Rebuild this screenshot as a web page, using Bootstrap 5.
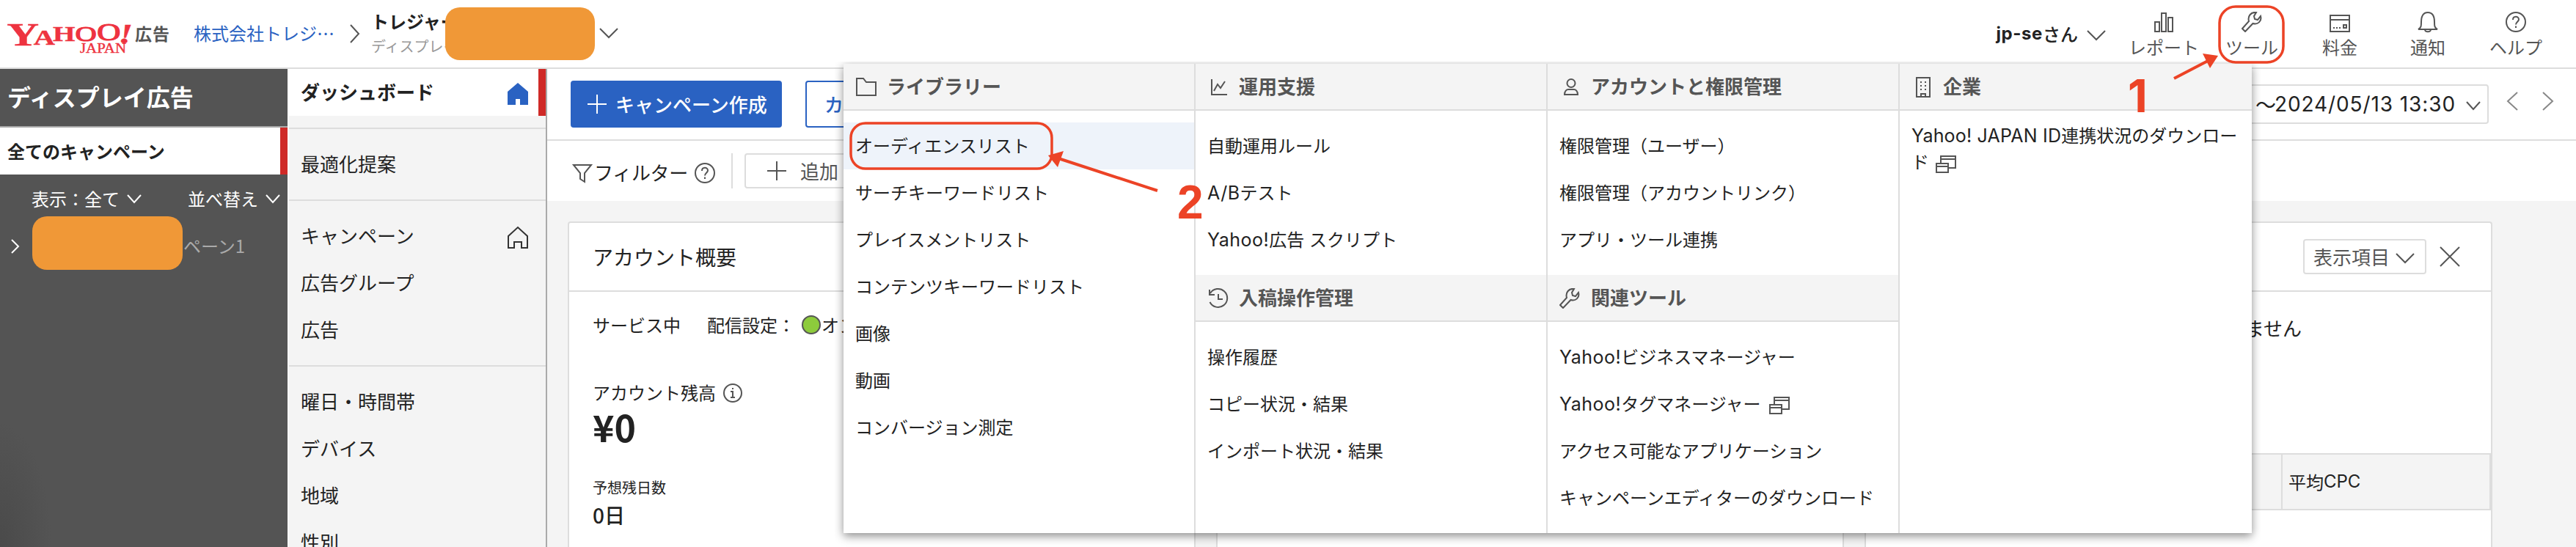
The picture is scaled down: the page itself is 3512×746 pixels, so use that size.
<!DOCTYPE html>
<html lang="ja">
<head>
<meta charset="utf-8">
<title>Yahoo!広告</title>
<link href="https://cdn.jsdelivr.net/npm/bootstrap@5.3.0/dist/css/bootstrap.min.css" rel="stylesheet">
<script src="https://cdn.jsdelivr.net/npm/bootstrap@5.3.0/dist/js/bootstrap.bundle.min.js"></script>
<style>
:root{--ink:#222;--sub:#555;--rule:#ddd;--pale:#f4f4f4;--brand:#2a62c2;--mark:#ec4326}
html{overflow:hidden}
body{font-family:"Inter","Noto Sans CJK JP",sans-serif;font-size:24px;line-height:1;color:var(--ink);background:#fff;width:3512px;height:746px;overflow:hidden;position:relative}
body *{white-space:nowrap}
svg{display:block;fill:none;stroke:#555;stroke-width:2;flex:none;overflow:visible}
.jp{font-family:"Noto Sans CJK JP",sans-serif}
.f26{font-size:26px}
.latin{font-size:25px;letter-spacing:.5px}
.topbar{height:94px;border-bottom:2px solid var(--rule)}
.brandname{width:168px;height:46px}
.mask{background:#f09837;border-radius:20px;flex:none}
.account{width:100px;overflow:visible}
.tool{width:120px;color:var(--sub)}
.shell{height:652px;overflow:hidden}
.campaigns{width:392px;background:radial-gradient(ellipse 70px 170px at 0 100%,#4a4a4a,#545454);color:#fff}
.campaigns h1{height:80px;font-size:32px;padding:0 0 3px 10px;border-bottom:2px solid #aaa}
.allcamp{height:64px;background:#fff;color:var(--ink);border-right:10px solid #cf2a27;padding:0 0 1px 10px}
.sidenav{width:354px;background:var(--pale);border-left:2px solid #fff;border-right:2px solid #aaa}
.sidenav a{height:64px;color:var(--ink);font-size:26px;padding:0 24px 2px 16px;text-decoration:none}
.sidenav .on{background:#fff;border-right:10px solid #cf2a27;padding-right:14px}
.sidenav a svg{margin-top:6px}
.sidenav .group{padding:16px 0;border-bottom:2px solid var(--rule)}
.bar1{height:98px;border-bottom:2px solid var(--rule);padding:0 28px 0 32px}
.bar2{height:82px;padding-left:35px;background:#fff}
.btn-a{height:64px;border-radius:4px;border:2px solid var(--brand);font-size:26px}
.panels{background:var(--pale);padding:28px 114px 0 28px;gap:28px;height:472px}
.panel{width:856px;background:#fff;border:2px solid var(--rule);border-bottom:0;border-radius:4px 4px 0 0}
.panel>header{height:94px;border-bottom:2px solid var(--rule);font-size:28px;padding:0 32px}
.line{padding-left:32px}
.box{border:2px solid var(--rule);border-radius:4px;background:#fff}
.mega{left:1150px;top:87px;width:1920px;height:640px;background:#fff;box-shadow:0 4px 12px rgba(0,0,0,.45);clip-path:inset(-3px -12px -20px -12px)}
.mega>div{width:480px;border-right:2px solid var(--rule)}
.mega>div:last-child{border-right:0}
.mega h2{height:64px;margin:0;background:var(--pale);border-bottom:2px solid var(--rule);color:var(--sub);font-size:26px;font-weight:700;padding:1px 0 0 16px}
.mega h2 svg{width:28px;height:28px;margin-right:15px}
.mega ul{list-style:none;margin:0;padding:16px 0}
.mega li{height:64px;padding:1px 0 0 16px;display:flex;align-items:center}
.mega li.hot{background:#eef3fa}
.notes{left:0;top:0;width:3512px;height:746px;stroke:var(--mark);pointer-events:none}
.notes text{font:700 64px "Liberation Sans",sans-serif;fill:var(--mark);stroke:none}
.notes polygon{fill:var(--mark)}
</style>
</head>
<body>
<svg width="0" height="0" class="position-absolute">
 <defs>
  <symbol id="wrench" viewBox="0 0 28 28"><path d="M1 23L10 13C8 6 13 0 20 1L17 6l1 4 4 1 4-5c2 7-4 12-10.500 10L5 27Z"/></symbol>
  <symbol id="windows" viewBox="0 0 28 24"><path d="M7 10V1h20v16h-9M7 5h20M1 11h16v12H1zM1 15h16"/></symbol>
  <symbol id="help" viewBox="0 0 28 28"><circle cx="14" cy="14" r="13"/><path d="M10 11c0-5.500 8-5.500 8-.5 0 3-4 3.500-4 7M14 19.500v2.500"/></symbol>
 </defs>
</svg>

<header class="topbar d-flex align-items-center">
 <svg class="brandname" viewBox="0 0 168 46" style="margin-left:10px"><g style="fill:#ee3340;stroke:#ee3340;stroke-width:.4;font-family:'Liberation Serif',serif;font-weight:700"><text transform="scale(1.35 1)" font-size="45"><tspan x="-.5" y="39">Y</tspan><tspan x="26.500" y="38" font-size="30">A</tspan><tspan x="46" y="33" font-size="29">H</tspan><tspan x="68.500" y="33" font-size="30" font-weight="400" stroke-width="1.200">O</tspan><tspan x="90.500" y="32" font-size="33" font-weight="400" stroke-width="1.200">O</tspan><tspan x="112" y="36" font-size="38" font-style="italic">!</tspan></text><text x="99" y="49" font-size="19" font-weight="400" textLength="63" lengthAdjust="spacingAndGlyphs">JAPAN</text></g></svg>
 <span class="fw-bold jp" style="color:#555;margin:0 0 2px 6px;width:80px;font-size:23px;letter-spacing:1px">広告</span>
 <span class="jp" style="color:#2a62c2;width:213px;margin-bottom:2px">株式会社トレジ…</span>
 <svg width="14" height="26"><path d="M1 1l11 12L1 25"/></svg>
 <div class="account jp d-flex flex-column" style="margin:0 0 2px 15px;width:101px;gap:12px"><b>トレジャー</b><span style="font-size:20px;color:#999">ディスプレイ</span></div>
 <div class="mask" style="width:204px;height:72px;position:relative"></div>
 <svg width="26" height="14" style="margin:0 0 2px 6px"><path d="M1 1l12 12L25 1"/></svg>
 <div class="ms-auto d-flex align-items-center"><span style="font-weight:700;letter-spacing:.6px">jp-se</span><span class="jp fw-medium">さん</span><svg width="26" height="14" style="margin:3px 19px 0 12px"><path d="M1 1l12 12L25 1"/></svg></div>
 <nav class="d-flex jp" style="margin-right:22px">
  <div class="tool d-flex flex-column align-items-center gap-2"><svg width="28" height="28"><path d="M2 14h6v13H2zM11 2h6v25h-6zM20 8h6v19h-6z"/></svg>レポート</div>
  <div class="tool d-flex flex-column align-items-center gap-2"><svg width="28" height="28"><use href="#wrench"/></svg>ツール</div>
  <div class="tool d-flex flex-column align-items-center gap-2"><svg width="28" height="28"><path d="M1 5h26v22H1zM1 11h26M19 18h4v4h-4zM5 22h2M9 22h2M13 22h2"/></svg>料金</div>
  <div class="tool d-flex flex-column align-items-center gap-2"><svg width="28" height="28"><path d="M1 24c4-2 4-5 4-10C5 5 8 1 14 1s9 4 9 13c0 5 0 8 4 10zM10 25c1 3 7 3 8 0"/></svg>通知</div>
  <div class="tool d-flex flex-column align-items-center gap-2"><svg width="28" height="28"><use href="#help"/></svg>ヘルプ</div>
 </nav>
</header>

<div class="shell d-flex">
 <aside class="campaigns jp flex-shrink-0">
  <h1 class="fw-bold m-0 d-flex align-items-center">ディスプレイ広告</h1>
  <div class="allcamp fw-bold d-flex align-items-center">全てのキャンペーン</div>
  <div class="d-flex align-items-center" style="height:56px;margin-top:5px;padding-left:43px"><span style="width:130px">表示：全て</span><svg width="20" height="12" style="stroke:#fff"><path d="M1 1l9 10 9-10"/></svg><span style="margin-left:63px;width:106px">並べ替え</span><svg width="20" height="12" style="stroke:#fff"><path d="M1 1l9 10 9-10"/></svg></div>
  <div class="d-flex align-items-center" style="height:74px;padding-left:15px;margin-top:-5px"><svg width="12" height="20" style="stroke:#fff;margin-right:17px;margin-top:10px"><path d="M1 1l9 9-9 9"/></svg><div class="mask" style="width:205px;height:73px"></div><span style="color:#aaa;margin:8px 0 0 1px">ペーン1</span></div>
 </aside>

 <nav class="sidenav jp flex-shrink-0">
  <div class="group pt-0">
   <a class="on fw-bold d-flex align-items-center justify-content-between">ダッシュボード<svg width="28" height="30" style="stroke:none;fill:#2a62c2"><path d="M0 12L14 0l14 12v18H17v-8h-6v8H0z"/></svg></a>
  </div>
  <div class="group"><a class="d-flex align-items-center">最適化提案</a></div>
  <div class="group">
   <a class="d-flex align-items-center justify-content-between">キャンペーン<svg width="28" height="30" style="stroke:#333"><path d="M1 13L14 1l13 12v16h-8v-8H9v8H1z"/></svg></a>
   <a class="d-flex align-items-center">広告グループ</a>
   <a class="d-flex align-items-center">広告</a>
  </div>
  <div class="group">
   <a class="d-flex align-items-center">曜日・時間帯</a>
   <a class="d-flex align-items-center">デバイス</a>
   <a class="d-flex align-items-center">地域</a>
   <a class="d-flex align-items-center">性別</a>
  </div>
 </nav>

 <main class="flex-grow-1">
  <div class="bar1 d-flex align-items-center">
   <div class="btn-a jp d-flex align-items-center fw-medium" style="width:288px;background:#2a62c2;color:#fff;padding-left:21px"><svg width="26" height="26" style="stroke:#fff;margin-right:12px"><path d="M13 0v26M0 13h26"/></svg>キャンペーン作成</div>
   <div class="btn-a jp fw-medium d-flex align-items-center" style="width:288px;color:#2a62c2;margin-left:32px;padding-left:24px">カスタム</div>
   <div class="box d-flex align-items-center justify-content-end ms-auto" style="width:700px;height:54px;font-size:28px;padding-right:9px"><span class="jp" style="margin-right:-2px">～</span><span style="letter-spacing:.9px">2024/05/13 13:30</span><svg width="20" height="12" style="margin-left:14px;margin-top:4px"><path d="M1 1l9 10 9-10"/></svg></div>
   <svg width="15" height="26" style="stroke:#888;margin:-8px 0 0 25px"><path d="M14 1L1 13l13 12"/></svg>
   <svg width="15" height="26" style="stroke:#888;margin:-8px 3px 0 33px"><path d="M1 1l13 12L1 25"/></svg>
  </div>
  <div class="bar2 jp f26 d-flex align-items-center">
   <svg width="26" height="26" style="margin-top:8px"><path d="M1 1h24l-9 11v12l-6-4v-8z"/></svg><span style="margin:3px 10px 0 3px;width:127px;letter-spacing:-.3px">フィルター</span><svg width="28" height="28" style="margin-top:6px"><use href="#help"/></svg>
   <div style="width:2px;height:48px;background:#ddd;margin:0 16px 0 22px"></div>
   <div class="box d-flex align-items-center" style="width:190px;height:48px;padding-left:29px;color:#555"><svg width="26" height="26" style="margin-right:19px"><path d="M13 0v26M0 13h26"/></svg>追加</div>
  </div>
  <div class="panels d-flex">
   <section class="panel jp">
    <header class="d-flex align-items-center">アカウント概要</header>
    <div class="line d-flex align-items-center" style="margin-top:31px;height:28px"><span style="width:156px">サービス中</span><span>配信設定：</span><svg width="26" height="26" style="margin-left:9px;fill:#8dcb3c"><circle cx="13" cy="13" r="12"/></svg><span style="margin-left:1px">オン</span></div>
    <div class="line d-flex align-items-center" style="margin-top:64px;height:28px">アカウント残高<svg width="26" height="26" style="margin-left:10px;margin-top:1px"><circle cx="13" cy="13" r="12"/><path d="M10 11h3v8M10 19h6M13 6v2"/></svg></div>
    <div class="line fw-bold" style="font-size:50px;line-height:48px;margin-top:8px">¥0</div>
    <div class="line" style="font-size:20px;margin-top:50px">予想残日数</div>
    <div class="line fw-medium" style="font-size:28px;margin-top:13px">0日</div>
   </section>
   <section class="panel"><header></header></section>
   <section class="panel d-flex flex-column">
    <header class="d-flex align-items-center justify-content-end" style="padding-right:42px"><div class="box jp f26 d-flex align-items-center" style="width:168px;height:48px;color:#555;padding-left:12px">表示項目<svg width="26" height="14" style="margin:4px 0 0 8px"><path d="M1 1l12 12L25 1"/></svg></div><svg width="28" height="28" style="margin-left:18px"><path d="M1 1l26 26M27 1L1 27"/></svg></header>
    <div class="jp f26 text-end" style="padding:36px 258px 0 0;height:220px">データがありません</div>
    <div class="d-flex" style="height:78px;background:#f4f4f4;border:2px solid #ddd"><div style="width:566px;border-right:2px solid #ddd"></div><div class="d-flex align-items-center" style="padding-left:8px"><span class="jp">平均</span><span>CPC</span></div></div>
   </section>
  </div>
 </main>
</div>

<div class="mega position-absolute d-flex">
 <div>
  <h2 class="d-flex align-items-center"><svg viewBox="0 0 28 28"><path d="M2 2h9l4 5h13v18H2z"/></svg>ライブラリー</h2>
  <ul><li class="hot">オーディエンスリスト</li><li>サーチキーワードリスト</li><li>プレイスメントリスト</li><li>コンテンツキーワードリスト</li><li>画像</li><li>動画</li><li>コンバージョン測定</li></ul>
 </div>
 <div>
  <h2 class="d-flex align-items-center"><svg viewBox="0 0 28 28"><path d="M6 3v21h21M9 19l5-9 4 5 6-9"/></svg>運用支援</h2>
  <ul><li>自動運用ルール</li><li><span class="latin">A/B</span>テスト</li><li><span class="latin">Yahoo!</span>広告 スクリプト</li></ul>
  <h2 class="d-flex align-items-center"><svg viewBox="0 0 28 28"><path d="M4 7a12.500 12.500 0 1 1-.5 12M3 2v7h7M15 8v7h6"/></svg>入稿操作管理</h2>
  <ul><li>操作履歴</li><li>コピー状況・結果</li><li>インポート状況・結果</li></ul>
 </div>
 <div>
  <h2 class="d-flex align-items-center"><svg viewBox="0 0 28 28"><circle cx="16" cy="8.500" r="5.500"/><path d="M7 24c0-5 3-7 5-7h8c2 0 5 2 5 7z"/></svg>アカウントと権限管理</h2>
  <ul><li>権限管理（ユーザー）</li><li>権限管理（アカウントリンク）</li><li>アプリ・ツール連携</li></ul>
  <h2 class="d-flex align-items-center"><svg viewBox="0 0 28 28"><use href="#wrench"/></svg>関連ツール</h2>
  <ul><li><span class="latin">Yahoo!</span>ビジネスマネージャー</li><li><span class="latin">Yahoo!</span>タグマネージャー<svg width="28" height="24" style="margin:3px 0 0 11px"><use href="#windows"/></svg></li><li>アクセス可能なアプリケーション</li><li>キャンペーンエディターのダウンロード</li></ul>
 </div>
 <div>
  <h2 class="d-flex align-items-center"><svg viewBox="0 0 28 28"><path d="M7 1h18v26H7zM13 27v-4h6v4M12 7h2M18 7h2M12 12h2M18 12h2M12 17h2M18 17h2"/></svg>企業</h2>
  <div style="padding:16px 0 0 16px;line-height:36px"><div><span class="latin" style="letter-spacing:.2px">Yahoo! JAPAN ID</span>連携状況のダウンロー</div><div class="d-flex align-items-center">ド<svg width="28" height="24" style="margin:3px 0 0 9px"><use href="#windows"/></svg></div></div>
 </div>
</div>

<svg class="notes position-absolute" viewBox="0 0 3512 746">
 <rect x="3026" y="9" width="87" height="76" rx="22" stroke-width="3.500"/>
 <rect x="1160" y="168" width="274" height="62" rx="20" stroke-width="3.500"/>
 <path d="M2964 107L3012 82M1578 260L1440 215" stroke-width="4"/>
 <polygon points="3024,76 3003,73 3013,93" stroke="none"/>
 <polygon points="1429,212 1450,206 1442,228" stroke="none"/>
 <text x="2901" y="153" style="font-family:Inter,sans-serif;font-size:62px">1</text><text x="1605" y="298">2</text>
</svg>
</body>
</html>
